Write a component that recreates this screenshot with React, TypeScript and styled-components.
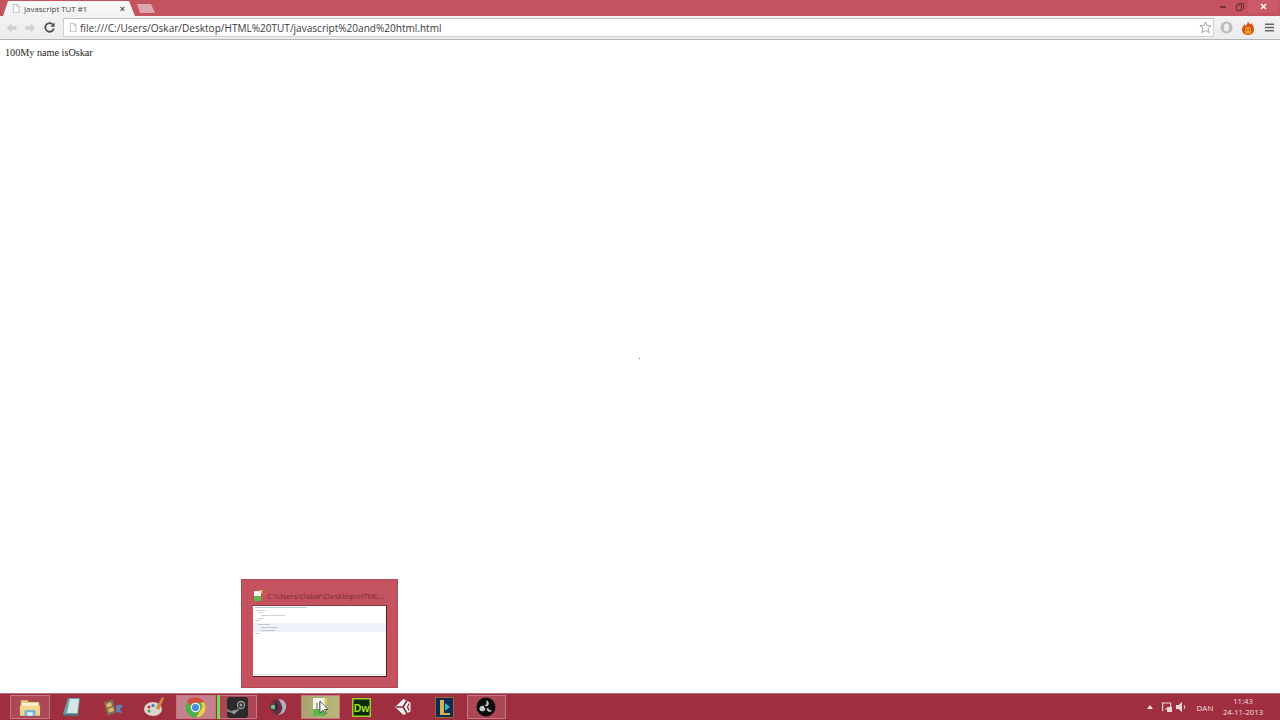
import React from "react";
import styled, { createGlobalStyle } from "styled-components";

const Global = createGlobalStyle`
  html, body { margin: 0; padding: 0; background: #fff; }
  #root { width: 1280px; height: 720px; overflow: hidden; }
`;
const Screen = styled.div`
  position: relative; width: 1280px; height: 720px; display: flex; flex-direction: column;
  background: #fff; overflow: hidden; font-family: "Open Sans", "Noto Sans", sans-serif;
`;
const TitleBar = styled.div`
  height: 16px; flex: none; background: #c4525f; display: flex; align-items: flex-end; padding-left: 3px; position: relative;
`;
const Tab = styled.div`
  width: 132px; height: 15px; box-sizing: border-box; background: linear-gradient(#fafafa, #f1f1f1);
  clip-path: polygon(0 100%, 5px 0, 126px 0, 132px 100%);
  display: flex; align-items: center; padding: 0 5px 0 9px; gap: 4px;
`;
const TabTitle = styled.span`
  flex: 1; font: 7.9px "Open Sans", sans-serif; color: #444; white-space: nowrap;
`;
const TabClose = styled.span`
  font: bold 9px "Liberation Sans", sans-serif; color: #555; margin-right: 5px;
`;
const NewTab = styled.div`
  width: 18px; height: 9px; margin: 0 0 3px 2px; background: #dda7ae;
  clip-path: polygon(0 0, 14px 0, 18px 100%, 3px 100%);
`;
const WindowButtons = styled.div`
  margin-left: auto; margin-right: 2px; align-self: flex-start; display: flex; align-items: flex-start; height: 13px; color: #fff;
`;
const WinBtn = styled.div<{ $w: number; $red?: boolean }>`
  width: ${p => p.$w}px; height: 13px; display: flex; align-items: center; justify-content: center;
  background: ${p => (p.$red ? "#cb5a66" : "transparent")};
`;
const Toolbar = styled.div`
  height: 24px; flex: none; box-sizing: border-box; background: linear-gradient(#f2f2f2, #ececec);
  border-bottom: 1px solid #b5b5b5; display: flex; align-items: center; padding-left: 2px;
`;
const NavBtn = styled.div`
  width: 19px; height: 20px; display: flex; align-items: center; justify-content: center; flex: none;
`;
const Omnibox = styled.div`
  width: 1151px; height: 19px; margin-left: 4px; box-sizing: border-box; background: #fff; border: 1px solid #cfcfcf;
  border-top-color: #bdbdbd; border-radius: 1px; display: flex; align-items: center; padding: 0 1px 0 5px; flex: none;
`;
const Url = styled.span`
  flex: 1; font: 10.05px "Open Sans", sans-serif; color: #3a3a3a; margin-left: 3px; white-space: nowrap;
`;
const ToolIcons = styled.div`
  display: flex; align-items: center; flex: 1;
`;
const ToolIcon = styled.div<{ $w: number }>`
  width: ${p => p.$w}px; height: 20px; display: flex; align-items: center; justify-content: center;
`;
const Page = styled.div`
  flex: 1; padding: 7px 0 0 5px; font: 10.2px "Liberation Serif", serif; color: #222; position: relative;
`;
const Speck = styled.div`
  position: absolute; left: 639px; top: 318px; width: 1px; height: 1px; background: #777;
`;
const Taskbar = styled.div`
  height: 27px; flex: none; box-sizing: border-box; background: #9f2e3f; border-top: 1px solid #b9707a;
  display: flex; align-items: center; padding-left: 10px; color: #fff;
`;
const Task = styled.div<{ $state?: "on" | "hot" | "open" }>`
  width: 39.5px; height: 24px; margin-right: 2px; flex: none; box-sizing: border-box; display: flex; align-items: center; justify-content: center;
  background: ${p => p.$state === "on" ? "#c5828c" : p.$state === "hot" ? "linear-gradient(90deg,#a9a56c,#b6b67d)" : p.$state === "open" ? "#ad4655" : "transparent"};
  border: 1px solid ${p => p.$state ? "#bd7984" : "transparent"};
  position: relative;
`;
const GreenMark = styled.div`
  position: absolute; left: -2px; top: -1px; bottom: -1px; width: 3px; background: #6fdc52;
`;
const Tray = styled.div`
  margin-left: auto; display: flex; align-items: center; height: 100%;
`;
const TrayItem = styled.div<{ $w: number }>`
  width: ${p => p.$w}px; display: flex; align-items: center; justify-content: center;
`;
const Lang = styled.span`
  font: 8px "Open Sans", sans-serif; color: #f3dfe1; width: 30px; text-align: center;
`;
const Clock = styled.div`
  width: 46px; margin-right: 14px; text-align: center; font: 7.7px/11px "Open Sans", sans-serif; color: #f3dfe1;
`;
const Preview = styled.div`
  position: absolute; left: 241px; top: 579px; width: 157px; height: 109px; box-sizing: border-box;
  background: #c4525f; border: 1px solid #b04a58; padding: 9px 11px 0 11px;
`;
const PreviewHead = styled.div`
  display: flex; align-items: center; gap: 4px; height: 13px; margin-bottom: 3px;
`;
const PreviewTitle = styled.span`
  font: 7.8px "Open Sans", sans-serif; color: #7a2a38; white-space: nowrap;
`;
const Thumb = styled.div`
  width: 134px; height: 72px; box-sizing: border-box; background: #fff; border-right: 1px solid #5a1a26; border-bottom: 1px solid #5a1a26;
  border-top: 1px solid #8a3a48; padding: 1px 2px; display: flex; flex-direction: column; gap: 1.7px; position: relative;
`;
const ThumbLine = styled.div<{ $w: number; $in?: number; $hl?: boolean }>`
  height: 1px; width: ${p => p.$w}px; margin-left: ${p => p.$in || 0}px; background: ${p => (p.$hl ? "#c2c8d2" : "#d0d3d6")};
`;
const ThumbBand = styled.div`
  background: #eef0fa; margin: 0 -2px; padding: 1px 2px; display: flex; flex-direction: column; gap: 1.7px;
`;
const ThumbStatus = styled.div`
  position: absolute; left: 2px; right: 2px; bottom: 1px; height: 1px; background: #e2e4e6;
`;

const PageIcon = ({ s = 10 }: { s?: number }) => (
  <svg width={s} height={s * 1.15} viewBox="0 0 10 12"><path d="M1.5.5h5l2.5 2.5v8.5h-7.5z" fill="#fff" stroke="#a8a8a8" /><path d="M6.5.5v2.5h2.5" fill="#eee" stroke="#a8a8a8" /></svg>
);
const Arrow = ({ flip }: { flip?: boolean }) => (
  <svg width="11" height="10" viewBox="0 0 11 10" style={flip ? { transform: "scaleX(-1)" } : undefined}><path d="M5.5 0.5L.8 5l4.7 4.5V6.8h5V3.2h-5z" fill="#cfcfcf" /></svg>
);
const Reload = () => (
  <svg width="11" height="11" viewBox="0 0 11 11"><path d="M9.3 3.2A4.3 4.3 0 1 0 9.8 6.5" fill="none" stroke="#505050" strokeWidth="1.8" /><path d="M10.6 .5v4.2H6.4z" fill="#505050" /></svg>
);
const Star = () => (
  <svg width="13" height="13" viewBox="0 0 14 14"><path d="M7 1l1.8 4h4.2L9.7 8l1.2 4.6L7 10.2 3.100 12.600 4.300 8 1 5h4.200z" fill="#fff" stroke="#9a9a9a" /></svg>
);
const GreyCircle = () => (
  <svg width="13" height="13" viewBox="0 0 13 13"><circle cx="6.500" cy="6.500" r="6" fill="#bbbdc0" /><ellipse cx="6.500" cy="6.500" rx="2.600" ry="4" fill="#f0f0f0" /></svg>
);
const Flame = () => (
  <svg width="12" height="14" viewBox="0 0 12 14"><path d="M6 0c.5 2 1.500 2.500 2.500 3.500.5-.5.7-1 .7-1.500C11 4 12 6 12 8.500 12 11.500 9.500 14 6 14S0 11.500 0 8.500C0 6 1.500 4.500 2.500 3c0 .8.200 1.500.7 2C4.500 4 6 2.500 6 0z" fill="#d9531e" /><ellipse cx="6" cy="9.500" rx="3" ry="3.500" fill="#f2a71f" /><circle cx="4.700" cy="9" r=".7" fill="#5a2a10" /><circle cx="7.300" cy="9" r=".7" fill="#5a2a10" /></svg>
);
const Menu = () => (
  <svg width="9" height="9" viewBox="0 0 10 9"><path d="M0 0h10v1.800H0zM0 3.600h10v1.800H0zM0 7.200h10v1.800H0z" fill="#666" /></svg>
);
const FolderIcon = () => (
  <svg width="22" height="19" viewBox="0 0 24 20"><path d="M2 2h7l2 2h11v6H2z" fill="#e5c87a" /><path d="M3 5h18v4H3z" fill="#f8f0d0" /><path d="M1 8h22v11H1z" fill="#f0d78e" /><path d="M6 13h12v6H6z" fill="#6fb3d6" /><path d="M9 15h6v4H9z" fill="#dbeef7" /></svg>
);
const NotepadIcon = () => (
  <svg width="20" height="22" viewBox="0 0 20 22"><path d="M7 2h12l-2 16H2z" fill="#6fa0a8" /><path d="M9 3h9l-1.700 14H6z" fill="#d3e8e4" /><path d="M2 18h15l1 2H3z" fill="#55707a" /></svg>
);
const FilmIcon = () => (
  <svg width="22" height="20" viewBox="0 0 22 20"><path d="M2 5l9-3 3 14-9 3z" fill="#7a6a50" /><path d="M4 7l5-2 1 4-5 2zM6 12l5-2 1 4-5 2z" fill="#d8b36a" /><path d="M14 9c3-2 6-1 7 0l-3 3 2 4-6-1z" fill="#5b84b8" /></svg>
);
const PaletteIcon = () => (
  <svg width="22" height="22" viewBox="0 0 22 22"><ellipse cx="10" cy="13" rx="9" ry="7" fill="#d9d5cc" /><circle cx="6" cy="11" r="1.500" fill="#c33" /><circle cx="10" cy="9.500" r="1.500" fill="#3a7bc8" /><circle cx="6" cy="15" r="1.500" fill="#4a4" /><path d="M13 12L19 1l2 1-5 12z" fill="#d08a3a" /></svg>
);
const ChromeIcon = () => (
  <svg width="21" height="21" viewBox="0 0 21 21"><circle cx="10.500" cy="10.500" r="10" fill="#4faf4a" /><path d="M10.500 .5a10 10 0 0 1 8.700 5H10.500a5 5 0 0 0-4.500 2.900L2 4.200A10 10 0 0 1 10.500 .5z" fill="#d94a3d" /><path d="M19.200 5.500a10 10 0 0 1-8 15l4-7a5 5 0 0 0 0-8z" fill="#f5cb3f" /><circle cx="10.500" cy="10.500" r="4.800" fill="#f2f2f2" /><circle cx="10.500" cy="10.500" r="3.600" fill="#4c8ae0" /></svg>
);
const SteamIcon = () => (
  <svg width="21" height="21" viewBox="0 0 21 21"><rect width="21" height="21" rx="3" fill="#2c2a2b" /><circle cx="14" cy="8" r="3.500" fill="none" stroke="#9c9c9c" strokeWidth="1.300" /><circle cx="14" cy="8" r="1.500" fill="#9c9c9c" /><path d="M0 12l6 2.500 5-3 1 2-5 3-7-2z" fill="#888" /><circle cx="7" cy="15" r="2" fill="#999" /></svg>
);
const CrescentIcon = () => (
  <svg width="20" height="20" viewBox="0 0 20 20"><circle cx="9" cy="10" r="8" fill="#6a3040" /><path d="M9 2c6 0 9 4 8 9s-5 7-8 7c3-2 5-5 4-9-1-3-2-5-4-7z" fill="#b4b0c2" /><path d="M7 5c3 2 3 7 0 10-1-3-1-7 0-10z" fill="#3a2a3c" /><circle cx="4" cy="10" r="2.200" fill="#63c58e" /></svg>
);
const NppIcon = () => (
  <svg width="22" height="20" viewBox="0 0 22 20"><path d="M4 1h12v18H4z" fill="#f4f4ec" /><path d="M4 12h12v7H4z" fill="#5cb848" /><path d="M15 2l3-1v6l-2 2z" fill="#e2c85a" /><path d="M8 6v7M11 5v8" stroke="#777" strokeWidth="1.200" /><path d="M11 4v12l3-3 2 4 1.500-.7-2-3.800h3.500z" fill="#fff" stroke="#222" strokeWidth=".7" /></svg>
);
const DwIcon = () => (
  <svg width="19" height="19" viewBox="0 0 19 19"><rect x=".75" y=".75" width="17.500" height="17.500" fill="#0d2a0d" stroke="#9bd21f" strokeWidth="1.500" /><text x="9.500" y="13.500" textAnchor="middle" fontFamily="Liberation Sans" fontWeight="700" fontSize="10.500" fill="#a8df2a">Dw</text></svg>
);
const UnityIcon = () => (
  <svg width="20" height="20" viewBox="0 0 20 20"><path d="M10.500 2l7 3.500v9L10.500 18 2 10z" fill="#f2f2f2" /><path d="M10 10l4-6.500M10 10H3M10 10l4 6.500" stroke="#8a2a38" strokeWidth="1.600" /><path d="M16 6.500L14.500 10l1.500 3.500" fill="none" stroke="#8a2a38" strokeWidth="1.200" /></svg>
);
const LolIcon = () => (
  <svg width="19" height="21" viewBox="0 0 19 21"><rect x=".5" y=".5" width="18" height="20" fill="#0f2a56" stroke="#8d6b3a" /><path d="M5 3h4v13h6v2H5z" fill="#d8b04e" /><path d="M10 6l5 4-5 4z" fill="#2fb8c8" /></svg>
);
const ObsIcon = () => (
  <svg width="20" height="20" viewBox="0 0 20 20"><circle cx="10" cy="10" r="9.500" fill="#0c0c0c" /><path d="M10 3.500a3 3 0 0 1 1.500 5.500 3 3 0 0 1-3-.2A3.500 3.500 0 0 0 10 3.500zM4 13.500a3 3 0 0 1 4-4.300 3 3 0 0 0 1.600 2.700A3.500 3.500 0 0 1 4 13.500zM16 13.500a3 3 0 0 1-5.400-1.400 3 3 0 0 0 1.500-2.700A3.500 3.500 0 0 0 16 13.500z" fill="#c8c8c8" /></svg>
);
const FlagIcon = () => (
  <svg width="11" height="11" viewBox="0 0 11 11"><path d="M.6 9V1h8v6H3" fill="none" stroke="#e9d6d8" strokeWidth="1.200" /><rect x="5" y="5" width="5" height="5" fill="#e9d6d8" /></svg>
);
const SpeakerIcon = () => (
  <svg width="12" height="10" viewBox="0 0 12 10"><path d="M0 3h2.500L6 0v10L2.500 7H0z" fill="#e9d6d8" /><path d="M8 3c1 1 1 3 0 4" fill="none" stroke="#e9d6d8" /></svg>
);
const UpCaret = () => (
  <svg width="6" height="4" viewBox="0 0 6 4"><path d="M3 0l3 4H0z" fill="#f0e0e2" /></svg>
);
const NoteThumb = () => (
  <svg width="10" height="11" viewBox="0 0 10 11"><path d="M1 1h7v10H1z" fill="#f6f6ee" /><path d="M1 6h7v5H1z" fill="#5cb848" /><path d="M7 0h2.500v3H7z" fill="#e6d25a" /></svg>
);

const tasks: { icon: React.ReactNode; state?: "on" | "hot" | "open"; mark?: boolean }[] = [
  { icon: <FolderIcon />, state: "open" },
  { icon: <NotepadIcon /> },
  { icon: <FilmIcon /> },
  { icon: <PaletteIcon /> },
  { icon: <ChromeIcon />, state: "on" },
  { icon: <SteamIcon />, state: "open", mark: true },
  { icon: <CrescentIcon /> },
  { icon: <NppIcon />, state: "hot" },
  { icon: <DwIcon /> },
  { icon: <UnityIcon /> },
  { icon: <LolIcon /> },
  { icon: <ObsIcon />, state: "open" },
];

const thumbTop = [[10, 0], [5, 3], [24, 6], [5, 3], [5, 0]];
const thumbBand = [[12, 3], [16, 6], [14, 6]];

export default function App() {
  return (
    <Screen>
      <Global />
      <TitleBar>
        <Tab>
          <PageIcon s={8} />
          <TabTitle>Javascript TUT #1</TabTitle>
          <TabClose>×</TabClose>
        </Tab>
        <NewTab />
        <WindowButtons>
          <WinBtn $w={17}><svg width="6" height="2"><rect width="6" height="2" fill="#7a3039" /></svg></WinBtn>
          <WinBtn $w={17}><svg width="8" height="8" viewBox="0 0 8 8"><path d="M2 .5h5.500V6M.5 2h5v5.500h-5z" fill="none" stroke="#6a2c35" /></svg></WinBtn>
          <WinBtn $w={30} $red><svg width="7" height="7" viewBox="0 0 7 7"><path d="M1 1l5 5M6 1L1 6" stroke="#fff" strokeWidth="1.500" /></svg></WinBtn>
        </WindowButtons>
      </TitleBar>
      <Toolbar>
        <NavBtn><Arrow /></NavBtn>
        <NavBtn><Arrow flip /></NavBtn>
        <NavBtn><Reload /></NavBtn>
        <Omnibox>
          <PageIcon s={8} />
          <Url>file:///C:/Users/Oskar/Desktop/HTML%20TUT/javascript%20and%20html.html</Url>
          <Star />
        </Omnibox>
        <ToolIcons>
          <ToolIcon $w={24}><GreyCircle /></ToolIcon>
          <ToolIcon $w={19}><Flame /></ToolIcon>
          <ToolIcon $w={25}><Menu /></ToolIcon>
        </ToolIcons>
      </Toolbar>
      <Page>
        100My name isOskar
        <Speck />
      </Page>
      <Taskbar>
        {tasks.map((t, i) => (
          <Task key={i} $state={t.state}>
            {t.mark && <GreenMark />}
            {t.icon}
          </Task>
        ))}
        <Tray>
          <TrayItem $w={20}><UpCaret /></TrayItem>
          <TrayItem $w={14}><FlagIcon /></TrayItem>
          <TrayItem $w={16}><SpeakerIcon /></TrayItem>
          <Lang>DAN</Lang>
          <Clock>11:43<br />24-11-2013</Clock>
        </Tray>
      </Taskbar>
      <Preview>
        <PreviewHead>
          <NoteThumb />
          <PreviewTitle>C:\Users\Oskar\Desktop\HTML...</PreviewTitle>
        </PreviewHead>
        <Thumb>
          <ThumbLine $w={52} $hl />
          {thumbTop.map(([w, x], i) => <ThumbLine key={i} $w={w} $in={x} />)}
          <ThumbBand>
            {thumbBand.map(([w, x], i) => <ThumbLine key={i} $w={w} $in={x} $hl />)}
          </ThumbBand>
          <ThumbLine $w={5} $in={0} />
          <ThumbStatus />
        </Thumb>
      </Preview>
    </Screen>
  );
}
